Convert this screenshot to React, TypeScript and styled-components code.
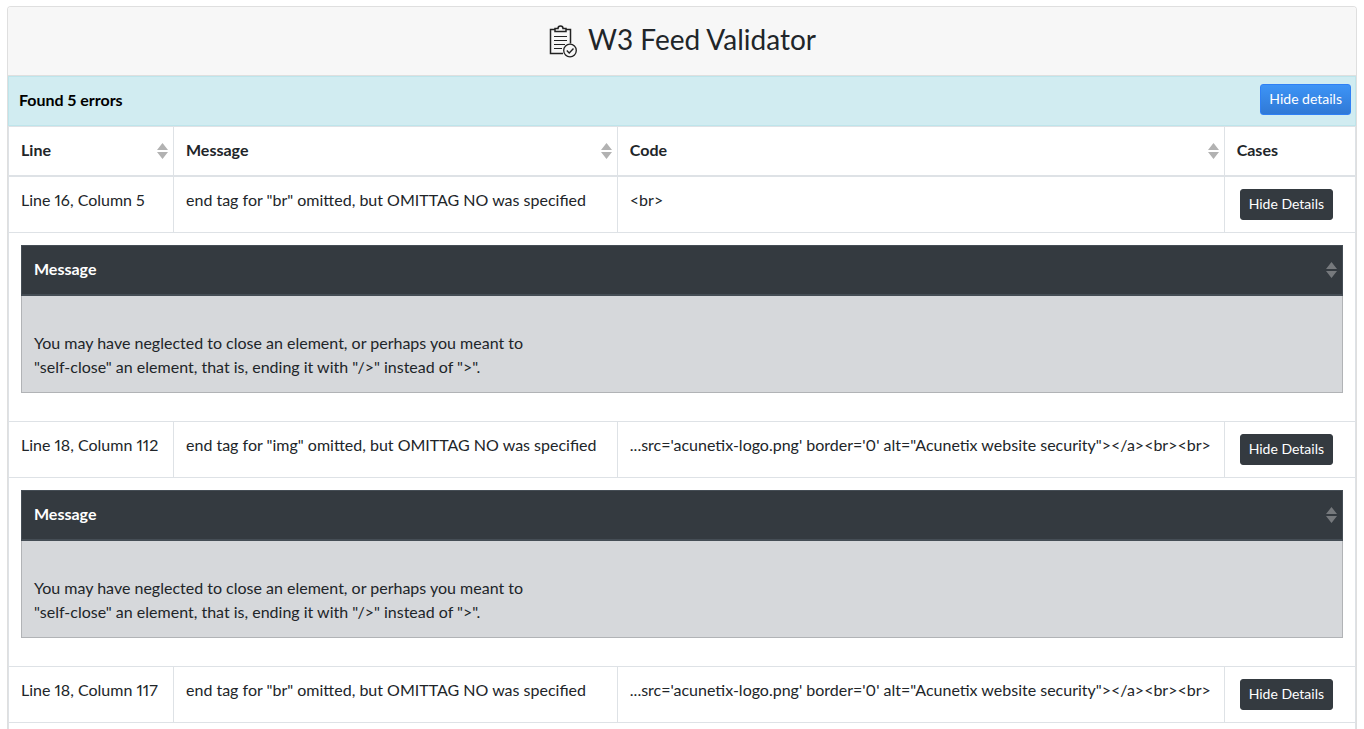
import React, { useState } from "react";
import styled, { createGlobalStyle, css } from "styled-components";

const GlobalStyle = createGlobalStyle`
  *, *::before, *::after { box-sizing: border-box; }
  body {
    margin: 0;
    background: #fff;
    color: #212529;
    font-family: "Proxima Nova", Lato, "Liberation Sans", sans-serif;
    font-size: 16px;
    font-variant-numeric: proportional-nums;
    line-height: 24px;
  }
`;

const Page = styled.main`
  display: flex;
  flex-direction: column;
  padding: 6px 7px 0;
`;

const Card = styled.section`
  border: 1px solid #dfdfdf;
  border-bottom: 0;
  border-radius: 4px 4px 0 0;
  background: #fff;
`;

const CardHeader = styled.header`
  display: flex;
  align-items: center;
  justify-content: center;
  gap: 10px;
  height: 69px;
  border-bottom: 1px solid #dfdfdf;
  border-radius: 3px 3px 0 0;
  background: #f7f7f7;
`;

const Title = styled.h1`
  margin: 0;
  padding-bottom: 4px;
  font-size: 28px;
  font-weight: 400;
  line-height: 34px;
`;

const Summary = styled.div`
  display: flex;
  align-items: flex-start;
  justify-content: space-between;
  height: 50px;
  padding: 7px 4px 0 10px;
  border: 1px solid #bee5eb;
  background: #d1ecf1;
  color: #000;
  line-height: 32px;
`;

const buttonBase = css`
  height: 31px;
  padding: 0 8px 2px;
  border-radius: 3px;
  color: #fff;
  font: inherit;
  font-size: 14px;
  line-height: 21px;
  white-space: nowrap;
  cursor: pointer;
`;

const PrimaryButton = styled.button`
  ${buttonBase}
  border: 1px solid #2f80f5;
  background: linear-gradient(#3d94f6, #3079d6);
`;

const DarkButton = styled.button`
  ${buttonBase}
  display: block;
  margin: 1px 3px 0;
  border: 1px solid #343a40;
  background: #343a40;
`;

const Table = styled.table`
  width: 100%;
  border-collapse: collapse;
  table-layout: fixed;
`;

const HeadCell = styled.th<{ $dark?: boolean }>`
  padding: 11px 5px 13px 12px;
  border: 1px solid ${(p) => (p.$dark ? "#454d55" : "#dee2e6")};
  border-bottom-width: 2px;
  background: ${(p) => (p.$dark ? "#343a40" : "#fff")};
  color: ${(p) => (p.$dark ? "#fff" : "#212529")};
  text-align: left;
`;

const HeadContent = styled.div`
  display: flex;
  align-items: center;
  justify-content: space-between;
`;

const SortButton = styled.button<{ $dark?: boolean }>`
  display: flex;
  padding: 2px 0 0;
  border: 0;
  background: none;
  color: ${(p) => (p.$dark ? "#76797d" : "#b2b2b2")};
  cursor: pointer;
`;

const Cell = styled.td`
  padding: 11px 12px 12px;
  border: 1px solid #dee2e6;
  vertical-align: top;
  white-space: nowrap;
`;

const DetailHolder = styled(Cell)`
  padding: 12px;
`;

const EndCell = styled.td`
  height: 6px;
  padding: 0;
  border: 1px solid #dee2e6;
  border-bottom: 0;
`;

const DetailTable = styled(Table)`
  margin-bottom: 16px;
`;

const DetailCell = styled.td`
  padding: 35px 12px 13px;
  border: 1px solid #b1b3b6;
  background: #d6d8db;
`;

const ClipboardIcon = () => (
  <svg width="30" height="34" viewBox="0 0 30 34" fill="none" stroke="#222" aria-hidden="true">
    <path d="M7 5.500H2.500v24H15M18 5.500h4.500v14" strokeWidth="1.500" />
    <path d="M7 4.500h3a2.500 2.500 0 0 1 5 0h3v3H7z" strokeWidth="1.500" />
    <path d="M6 12.500h13M6 16.500h13M6 20.500h11M6 24.500h8" strokeWidth="1.200" />
    <circle cx="22" cy="26.500" r="6.300" strokeWidth="1.300" />
    <path d="M18.800 26.500l2.400 2.400 4.300-4.400" strokeWidth="1.400" />
  </svg>
);

const Sort = ({ label, dark }: { label: string; dark?: boolean }) => (
  <SortButton type="button" aria-label={`Sort by ${label}`} $dark={dark}>
    <svg width="11" height="16" viewBox="0 0 11 16" fill="currentColor" aria-hidden="true">
      <path d="M5.500 0l5.500 7H0zM0 9h11l-5.500 7z" />
    </svg>
  </SortButton>
);

const columns = ["Line", "Message", "Code"];

const logoCode = `...src='acunetix-logo.png' border='0' alt="Acunetix website security"></a><br><br>`;

const errors = [
  { line: "Line 16, Column 5", tag: "br", code: "<br>", detailed: true },
  { line: "Line 18, Column 112", tag: "img", code: logoCode, detailed: true },
  { line: "Line 18, Column 117", tag: "br", code: logoCode, detailed: false },
];

const Detail = () => (
  <DetailTable>
    <thead>
      <tr>
        <HeadCell $dark>
          <HeadContent>
            Message
            <Sort label="detail message" dark />
          </HeadContent>
        </HeadCell>
      </tr>
    </thead>
    <tbody>
      <tr>
        <DetailCell>
          You may have neglected to close an element, or perhaps you meant to
          <br />
          "self-close" an element, that is, ending it with "/&gt;" instead of "&gt;".
        </DetailCell>
      </tr>
    </tbody>
  </DetailTable>
);

export default function App() {
  const [showAll, setShowAll] = useState(true);
  const [hidden, setHidden] = useState<number[]>([]);
  const toggle = (i: number) =>
    setHidden((h) => (h.includes(i) ? h.filter((n) => n !== i) : [...h, i]));

  return (
    <>
      <GlobalStyle />
      <Page>
        <Card>
          <CardHeader>
            <ClipboardIcon />
            <Title>W3 Feed Validator</Title>
          </CardHeader>
          <Summary>
            <strong>Found 5 errors</strong>
            <PrimaryButton type="button" onClick={() => setShowAll(!showAll)}>
              {showAll ? "Hide details" : "Show details"}
            </PrimaryButton>
          </Summary>
          {showAll && (
            <Table>
              <colgroup>
                <col style={{ width: "12.25%" }} />
                <col style={{ width: "32.95%" }} />
                <col style={{ width: "45.05%" }} />
                <col />
              </colgroup>
              <thead>
                <tr>
                  {columns.map((c) => (
                    <HeadCell key={c}>
                      <HeadContent>
                        {c}
                        <Sort label={c} />
                      </HeadContent>
                    </HeadCell>
                  ))}
                  <HeadCell>Cases</HeadCell>
                </tr>
              </thead>
              <tbody>
                {errors.map((e, i) => (
                  <React.Fragment key={e.line}>
                    <tr>
                      <Cell>{e.line}</Cell>
                      <Cell>end tag for "{e.tag}" omitted, but OMITTAG NO was specified</Cell>
                      <Cell>{e.code}</Cell>
                      <Cell>
                        <DarkButton type="button" onClick={() => toggle(i)}>
                          {hidden.includes(i) ? "Show Details" : "Hide Details"}
                        </DarkButton>
                      </Cell>
                    </tr>
                    {e.detailed && !hidden.includes(i) && (
                      <tr>
                        <DetailHolder colSpan={4}>
                          <Detail />
                        </DetailHolder>
                      </tr>
                    )}
                  </React.Fragment>
                ))}
                <tr>
                  <EndCell colSpan={4} />
                </tr>
              </tbody>
            </Table>
          )}
        </Card>
      </Page>
    </>
  );
}
